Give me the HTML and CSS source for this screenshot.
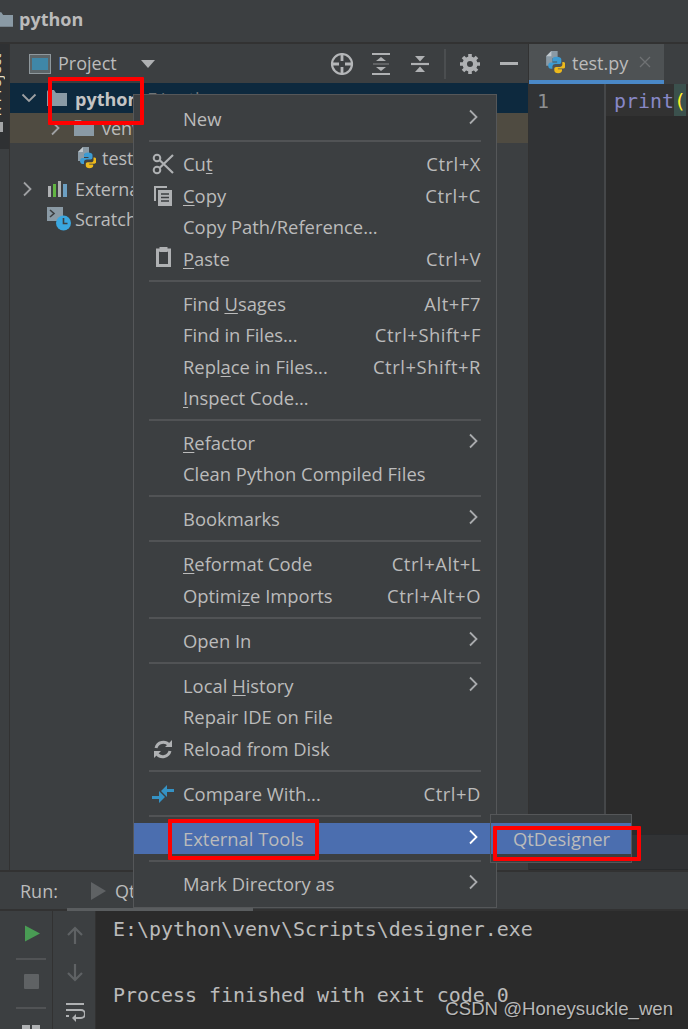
FILE: index.html
```html
<!DOCTYPE html>
<html lang="en">
<head>
<meta charset="utf-8">
<title>python</title>
<link rel="stylesheet" href="styles.css">
</head>
<body>
<svg class="defs" width="0" height="0" aria-hidden="true">
  <defs>
    <symbol id="folder" viewBox="0 0 20 16"><path d="M0 1.500 1 0h6l2 3h11v13H0z" fill="#8a9aa5"/></symbol>
    <symbol id="py" viewBox="0 0 20 22">
      <path d="M2 5 7 0h6v7H8v7H2z" fill="#8a9aa5"/><path d="M7 0v5H2z" fill="#c0c8ce"/>
      <path d="M12 5.500c-3 0-4 1-4 2.500v2h4.500v1H6.500C4.500 11 4 12.500 4 14s1 3 2.500 3H8v-2c0-1.500 1-2.500 3-2.500h3.500c1.200 0 2-.8 2-2V8c0-1.500-1.500-2.500-4.500-2.500z" fill="#3d9bd2"/>
      <path d="M17.500 10.500V13c0 1.500-1 2.300-2.500 2.300h-3.500c-1 0-1.700.7-1.700 1.700v1.700c0 1.500 1.500 2.500 3.700 2.500s3.700-1 3.700-2.500v-1.200h-4v-.8h5.300c1.500 0 2-1.500 2-3s-.5-3.200-2-3.200z" fill="#edb91c"/>
    </symbol>
    <symbol id="chev-r" viewBox="0 0 10 16"><path d="M2 1.500 8.500 8 2 14.500" fill="none" stroke="currentColor" stroke-width="1.800"/></symbol>
    <symbol id="chev-d" viewBox="0 0 16 10"><path d="M1.500 1.500 8 8l6.500-6.500" fill="none" stroke="currentColor" stroke-width="1.800"/></symbol>
  </defs>
</svg>

<div class="app">
  <header class="titlebar">
    <svg class="title-folder"><use href="#folder"/></svg>
    <span class="title-text">python</span>
  </header>

  <div class="workspace">
    <aside class="stripe"><div class="stripe-tab"><span class="stripe-label">1: Project</span><span class="stripe-chip"></span></div></aside>

    <section class="project">
      <div class="tool-header">
        <svg class="project-icon" viewBox="0 0 22 20"><rect x="0.500" y="0.500" width="21" height="19" fill="#5d6568" stroke="#8f989d"/><rect x="3" y="4" width="16" height="12" fill="#3f87a8"/></svg>
        <span class="tool-title">Project</span>
        <svg class="dropdown" viewBox="0 0 14 8"><path d="M0 0h14L7 8z" fill="#afb1b3"/></svg>
        <div class="tool-actions">
          <svg class="act" viewBox="0 0 24 24"><circle cx="12" cy="12" r="10" fill="none" stroke="#b4b6b8" stroke-width="2.200"/><path d="M12 1v8M12 15v8M1 12h8M15 12h8" stroke="#b4b6b8" stroke-width="2.800"/></svg>
          <svg class="act" viewBox="0 0 20 24"><path d="M1 2h18M1 22h18" stroke="#afb1b3" stroke-width="2.200"/><path d="M10 5l5 4H5zM10 19l-5-4h10z" fill="#afb1b3"/><path d="M2 12h16" stroke="#6e7072" stroke-width="1.500"/></svg>
          <svg class="act last" viewBox="0 0 20 24"><path d="M1 12h18" stroke="#afb1b3" stroke-width="2.200"/><path d="M10 9.500 5 4h10zM10 14.500l5 5.500H5z" fill="#afb1b3"/></svg>
          <span class="act-sep"></span>
          <svg class="act gear" viewBox="0 0 24 24"><path d="M12 4.500a7.500 7.500 0 1 0 0 15 7.500 7.500 0 0 0 0-15zm0 4.500a3 3 0 1 1 0 6 3 3 0 0 1 0-6z" fill="#afb1b3" fill-rule="evenodd"/><path d="M12 2v4M12 18v4M2 12h4M18 12h4M5 5l3 3M16 16l3 3M19 5l-3 3M8 16l-3 3" stroke="#afb1b3" stroke-width="3.600"/></svg>
          <span class="minimize"></span>
        </div>
      </div>
      <div class="tree">
        <div class="tree-row selected lvl0">
          <svg class="chev chev-down"><use href="#chev-d"/></svg>
          <svg class="tree-folder"><use href="#folder"/></svg>
          <b class="tree-bold">python</b><span class="tree-path">E:\python</span>
        </div>
        <div class="tree-row venv lvl1">
          <svg class="chev"><use href="#chev-r"/></svg>
          <svg class="tree-folder"><use href="#folder"/></svg>
          <span>venv</span>
        </div>
        <div class="tree-row lvl2">
          <svg class="tree-py"><use href="#py"/></svg>
          <span>test.py</span>
        </div>
        <div class="tree-row lvl0b">
          <svg class="chev"><use href="#chev-r"/></svg>
          <svg class="lib" viewBox="0 0 22 18"><path d="M1 6h3v11H1z" fill="#afb1b3"/><path d="M6 4h3v13H6z" fill="#62b543"/><path d="M11 1h3v16h-3z" fill="#afb1b3"/><path d="M16 4h4v13h-4z" fill="#6c9fc2"/></svg>
          <span>External Libraries</span>
        </div>
        <div class="tree-row lvl0c">
          <svg class="scratch" viewBox="0 0 24 24"><path d="M0 0h16v14H0z" fill="#8a9aa5"/><path d="M3 3l4 3.500L3 10" fill="none" stroke="#3c3f41" stroke-width="1.600"/><circle cx="16.500" cy="16" r="7.500" fill="#3aa7e0"/><path d="M16.500 11v5.500h4" fill="none" stroke="#3c3f41" stroke-width="1.600"/></svg>
          <span>Scratches and Consoles</span>
        </div>
      </div>
    </section>

    <section class="editor">
      <div class="tabs">
        <div class="tab">
          <svg class="tab-py"><use href="#py"/></svg>
          <span>test.py</span>
          <svg class="tab-x" viewBox="0 0 12 12"><path d="M1 1l10 10M11 1 1 11" stroke="#6f7274" stroke-width="1.300"/></svg>
        </div>
      </div>
      <div class="code">
        <div class="gutter"><span class="line-no">1</span></div>
        <div class="code-body">
          <div class="code-line"><span class="kw">print</span><span class="paren">(</span></div>
        </div>
      </div>
      <div class="editor-foot"></div>
    </section>
  </div>

  <section class="run">
    <div class="run-head">
      <span class="run-label">Run:</span>
      <svg class="run-tab-icon" viewBox="0 0 15 18"><path d="M0 0l15 9-15 9z" fill="#5f6264"/></svg>
      <span class="run-tab">QtDesigner</span>
      <span class="splitter"></span>
    </div>
    <div class="run-body">
      <div class="run-col first">
        <svg class="ri play" viewBox="0 0 15 16"><path d="M0 0l15 8-15 8z" fill="#499c54"/></svg>
        <span class="rsep"></span>
        <span class="stop"></span>
        <span class="rsep second"></span>
        <svg class="layout" viewBox="0 0 18 12"><path d="M0 0h8v12H0zM10 0h8v6h-8z" fill="#afb1b3"/></svg>
      </div>
      <div class="run-col second-col">
        <svg class="ri arrow" viewBox="0 0 16 18"><path d="M8 18V2M1 9l7-7 7 7" fill="none" stroke="#5f6264" stroke-width="2.200"/></svg>
        <svg class="ri arrow down" viewBox="0 0 16 18"><path d="M8 0v16M1 9l7 7 7-7" fill="none" stroke="#5f6264" stroke-width="2.200"/></svg>
        <svg class="ri wrap" viewBox="0 0 20 20"><path d="M1 2h18M1 8h15a3 3 0 0 1 0 8H8M1 14h3" fill="none" stroke="#afb1b3" stroke-width="2"/><path d="M11 12l-4 4 4 4z" fill="#afb1b3"/></svg>
      </div>
      <pre class="console">E:\python\venv\Scripts\designer.exe

Process finished with exit code 0</pre>
    </div>
  </section>

  <div class="watermark">CSDN @Honeysuckle_wen</div>

  <nav class="menu">
    <div class="mi"><span class="ml">New</span><svg class="sub"><use href="#chev-r"/></svg></div>
    <div class="msep"></div>
    <div class="mi">
      <svg class="mic" viewBox="0 0 22 22"><circle cx="5" cy="5" r="3.300" fill="none" stroke="#afb1b3" stroke-width="2"/><circle cx="5" cy="17" r="3.300" fill="none" stroke="#afb1b3" stroke-width="2"/><path d="M7.500 7 21 20M7.500 15 21 2" stroke="#afb1b3" stroke-width="2.200"/></svg>
      <span class="ml">Cu<u>t</u></span><span class="ks">Ctrl+X</span>
    </div>
    <div class="mi">
      <svg class="mic" viewBox="0 0 22 22"><path d="M2 1h13v2H4v13H2z" fill="#afb1b3"/><path d="M6 5h14v16H6z" fill="#afb1b3"/><path d="M9 9h8M9 12.500h8M9 16h8" stroke="#3c3f41" stroke-width="1.500"/></svg>
      <span class="ml"><u>C</u>opy</span><span class="ks">Ctrl+C</span>
    </div>
    <div class="mi"><span class="ml">Copy Path/Reference...</span></div>
    <div class="mi">
      <svg class="mic" viewBox="0 0 22 22"><path d="M5.500 3h12v15.500h-12z" fill="none" stroke="#afb1b3" stroke-width="3"/><path d="M7.500 0h8v5h-8z" fill="#afb1b3"/></svg>
      <span class="ml"><u>P</u>aste</span><span class="ks">Ctrl+V</span>
    </div>
    <div class="msep"></div>
    <div class="mi"><span class="ml">Find <u>U</u>sages</span><span class="ks">Alt+F7</span></div>
    <div class="mi"><span class="ml">Find in Files...</span><span class="ks">Ctrl+Shift+F</span></div>
    <div class="mi"><span class="ml">Repl<u>a</u>ce in Files...</span><span class="ks">Ctrl+Shift+R</span></div>
    <div class="mi"><span class="ml"><u>I</u>nspect Code...</span></div>
    <div class="msep"></div>
    <div class="mi"><span class="ml"><u>R</u>efactor</span><svg class="sub"><use href="#chev-r"/></svg></div>
    <div class="mi"><span class="ml">Clean Python Compiled Files</span></div>
    <div class="msep"></div>
    <div class="mi"><span class="ml">Bookmarks</span><svg class="sub"><use href="#chev-r"/></svg></div>
    <div class="msep"></div>
    <div class="mi"><span class="ml"><u>R</u>eformat Code</span><span class="ks">Ctrl+Alt+L</span></div>
    <div class="mi"><span class="ml">Optimi<u>z</u>e Imports</span><span class="ks">Ctrl+Alt+O</span></div>
    <div class="msep"></div>
    <div class="mi"><span class="ml">Open In</span><svg class="sub"><use href="#chev-r"/></svg></div>
    <div class="msep"></div>
    <div class="mi"><span class="ml">Local <u>H</u>istory</span><svg class="sub"><use href="#chev-r"/></svg></div>
    <div class="mi"><span class="ml">Repair IDE on File</span></div>
    <div class="mi">
      <svg class="mic" viewBox="-1 -2 22 22"><path d="M3 8a7.500 7.500 0 0 1 13-3M17 11a7.500 7.500 0 0 1-13 3" fill="none" stroke="#afb1b3" stroke-width="3"/><path d="M19 0v7h-7zM1 18v-7h7z" fill="#afb1b3"/></svg>
      <span class="ml">Reload from Disk</span>
    </div>
    <div class="msep"></div>
    <div class="mi">
      <svg class="mic" viewBox="0 0 22 22"><path d="M9 8l6-6v4h7v3h-7v5z" fill="#3592c4"/><path d="M13 14l-6 6v-4H0v-3h7V8z" fill="#3592c4"/></svg>
      <span class="ml">Compare With...</span><span class="ks">Ctrl+D</span>
    </div>
    <div class="msep"></div>
    <div class="mi active"><span class="ml">External Tools</span><svg class="sub"><use href="#chev-r"/></svg></div>
    <div class="msep"></div>
    <div class="mi"><span class="ml">Mark Directory as</span><svg class="sub"><use href="#chev-r"/></svg></div>
  </nav>

  <div class="submenu"><div class="sub-item">QtDesigner</div></div>

  <span class="mark mark-python"></span>
  <span class="mark mark-tools"></span>
  <span class="mark mark-qt"></span>
</div>
</body>
</html>
```

FILE: styles.css
```css
* { box-sizing: border-box; }
html, body { margin: 0; padding: 0; }
body {
  width: 688px;
  height: 1029px;
  overflow: hidden;
  background: #3c3f41;
  font-family: "Open Sans", "Noto Sans", sans-serif;
  font-size: 18.400px;
  color: #bbbbbb;
}
.defs { position: absolute; }
.app {
  position: relative;
  width: 688px;
  height: 1029px;
  display: flex;
  flex-direction: column;
  overflow: hidden;
}

/* title bar */
.titlebar {
  height: 44px;
  flex: none;
  display: flex;
  align-items: center;
  border-bottom: 2px solid #323232;
  background: #3c3f41;
}
.title-folder { width: 18px; height: 15px; margin: 0 6px 4px -5px; flex: none; }
.title-text { font-weight: 700; font-size: 18px; margin-bottom: 4px; }

/* main area */
.workspace { flex: none; height: 826px; display: flex; }
.stripe { width: 10px; flex: none; background: #3c3f41; border-right: 1px solid #323232; }
.stripe-tab {
  position: relative;
  width: 9px;
  height: 105px;
  background: #2f3133;
  overflow: hidden;
}
.stripe-label {
  display: block;
  writing-mode: vertical-rl;
  transform: rotate(180deg);
  font-size: 15px;
  line-height: 16px;
  color: #e6dfc4;
  margin-left: -13px;
  height: 70px;
  margin-top: 5px;
}
.stripe-chip { position: absolute; left: 0; top: 78px; width: 3px; height: 10px; background: #a3a5a7; }

.project { width: 518px; flex: none; display: flex; flex-direction: column; }
.tool-header {
  height: 39px;
  flex: none;
  display: flex;
  align-items: center;
  padding-left: 19px;
}
.project-icon { width: 22px; height: 20px; flex: none; }
.tool-title { margin: 0 0 2px 7px; font-size: 18px; width: 83px; }
.dropdown { width: 14px; height: 8px; flex: none; }
.tool-actions { margin-left: auto; display: flex; align-items: center; height: 39px; }
.act { width: 24px; height: 24px; flex: none; margin-right: 15px; }
.act.last { margin-right: 12px; }
.act-sep { width: 2px; height: 30px; background: #4b4e50; margin-right: 12px; }
.gear { margin-right: 18px; }
.minimize { width: 18px; height: 3px; background: #afb1b3; margin-right: 10px; }

.tree { flex: 1; display: flex; flex-direction: column; }
.tree-row {
  height: 30.200px;
  flex: none;
  display: flex;
  align-items: center;
  white-space: nowrap;
  font-size: 18px;
}
.tree-row.selected { background: #0d293e; }
.tree-row.venv { background: #4f4b41; }
.chev { width: 10px; height: 16px; flex: none; color: #9fa1a3; }
.chev-down { width: 16px; height: 10px; }
.lvl0 { padding-left: 11px; }
.lvl0 .tree-folder { margin-left: 10px; }
.tree-folder { width: 20px; height: 16px; flex: none; }
.tree-bold { margin: 2px 0 0 8px; font-weight: 700; color: #c4c4c4; }
.tree-path { margin: 2px 0 0 8px; color: #6f7476; }
.lvl1 { padding-left: 40px; }
.lvl1 .tree-folder { margin-left: 14px; }
.lvl1 span { margin-left: 8px; }
.lvl2 { padding-left: 66px; }
.tree-py { width: 20px; height: 22px; flex: none; }
.lvl2 span { margin-left: 6px; }
.lvl0b { padding-left: 12px; }
.lib { width: 22px; height: 18px; flex: none; margin-left: 15px; }
.lvl0b span { margin-left: 6px; }
.lvl0c { padding-left: 37px; }
.scratch { width: 24px; height: 24px; flex: none; }
.lvl0c span { margin-left: 4px; }

.editor { flex: 1; min-width: 0; display: flex; flex-direction: column; border-left: 1px solid #323232; }
.tabs { height: 40px; flex: none; background: #3c3f41; }
.tab {
  width: 135px;
  height: 40px;
  background: #4e5254;
  border-bottom: 4px solid #4a88c7;
  display: flex;
  align-items: center;
  padding-left: 15px;
  font-size: 18px;
}
.tab-py { width: 21px; height: 23px; flex: none; }
.tab span { margin: 2px 0 0 7px; }
.tab-x { width: 12px; height: 12px; margin-left: 11px; flex: none; }
.code { flex: 1; min-height: 0; display: flex; }
.gutter { width: 77px; flex: none; background: #313335; border-right: 2px solid #454749; padding: 4px 0 0 8px; }
.line-no, .code-line {
  font-family: "DejaVu Sans Mono", "Liberation Mono", monospace;
  font-size: 19.900px;
  line-height: 28px;
}
.line-no { color: #8e9092; }
.code-body { flex: 1; background: #2b2b2b; }
.code-line { background: #323232; height: 32px; padding: 4px 0 0 8px; white-space: nowrap; overflow: hidden; }
.kw { color: #8888c6; }
.paren { color: #ffef28; background: #3b514d; display: inline-block; height: 32px; margin-top: -4px; padding-top: 4px; }
.editor-foot { height: 36px; flex: none; background: #313335; border-top: 1px solid #292b2d; border-bottom: 1px solid #292b2d; }

/* run panel */
.run { flex: 1; min-height: 0; display: flex; flex-direction: column; }
.run-head {
  position: relative;
  height: 41px;
  flex: none;
  display: flex;
  align-items: center;
  padding-left: 20px;
  font-size: 18px;
  border-top: 2px solid #323232;
  border-bottom: 2px solid #323232;
}
.splitter { position: absolute; left: 67px; bottom: -2px; width: 186px; height: 3px; background: #5a5d5f; }
.run-tab-icon { width: 15px; height: 18px; margin-left: 33px; flex: none; }
.run-tab { margin-left: 9px; }
.run-body { flex: 1; min-height: 0; display: flex; padding-left: 10px; }
.run-col { flex: none; display: flex; flex-direction: column; align-items: center; }
.run-col.first { width: 43px; border-right: 1px solid #323232; padding-top: 14px; }
.run-col.second-col { width: 43px; border-right: 1px solid #323232; padding-top: 15px; }
.ri { flex: none; }
.play { width: 15px; height: 17px; margin-left: 2px; }
.rsep { width: 30px; height: 2px; background: #515355; margin-top: 16px; flex: none; }
.rsep.second { margin-top: 18px; }
.stop { width: 15px; height: 15px; background: #5f6264; margin-top: 14px; border-radius: 1px; flex: none; }
.layout { width: 18px; height: 12px; margin-top: 16px; flex: none; }
.arrow { width: 16px; height: 18px; margin-left: 2px; }
.arrow.down { margin-top: 20px; }
.wrap { width: 20px; height: 20px; margin: 20px 0 0 2px; }
.console {
  flex: 1;
  margin: 0;
  background: #2b2b2b;
  padding: 2px 0 0 17px;
  font-family: "DejaVu Sans Mono", "Liberation Mono", monospace;
  font-size: 19.930px;
  line-height: 33px;
  color: #bbbbbb;
  white-space: pre;
  overflow: hidden;
}
.watermark {
  position: absolute;
  right: 15px;
  top: 997px;
  font-family: "Liberation Sans", Arial, sans-serif;
  font-size: 18.600px;
  line-height: 24px;
  color: #b8b8b8;
  text-shadow: 1px 1px 1px #1c1c1c;
  white-space: nowrap;
}

/* context menu */
.menu {
  position: absolute;
  left: 133px;
  top: 94px;
  width: 364px;
  height: 814px;
  background: #3c3f41;
  border: 1px solid #555759;
  padding: 8.200px 0 0;
  display: flex;
  flex-direction: column;
}
.mi {
  height: 31.430px;
  flex: none;
  position: relative;
  display: flex;
  align-items: center;
  padding: 0 15px 0 49px;
  white-space: nowrap;
}
.ml { flex: none; }
.ml u { text-underline-offset: 2px; text-decoration-thickness: 1px; }
.ks { margin-left: auto; letter-spacing: 0.550px; }
.sub { width: 10px; height: 16px; margin-left: auto; margin-right: 3px; color: #a9abad; flex: none; margin-top: -3px; }
.mic { position: absolute; left: 18px; top: 5px; width: 22px; height: 22px; }
.msep { height: 13.600px; flex: none; display: flex; align-items: center; margin: 0 15px; }
.msep::before { content: ""; display: block; height: 2px; width: 100%; background: #515355; }
.mi.active { background: #4b6eaf; }
.mi.active .sub { color: #ffffff; }

.submenu {
  position: absolute;
  left: 490px;
  top: 814px;
  width: 142px;
  height: 49px;
  background: #3c3f41;
  border: 1px solid #555759;
  padding: 8px 0 0 0;
}
.sub-item {
  height: 31px;
  background: #4b6eaf;
  padding-left: 22px;
  line-height: 32px;
}

.mark { position: absolute; border: 4px solid #ff0000; border-radius: 1px; }
.mark-python { left: 48px; top: 77px; width: 96px; height: 48px; }
.mark-tools { left: 168px; top: 819px; width: 151px; height: 41px; }
.mark-qt { left: 493px; top: 826px; width: 148px; height: 35px; }
```
